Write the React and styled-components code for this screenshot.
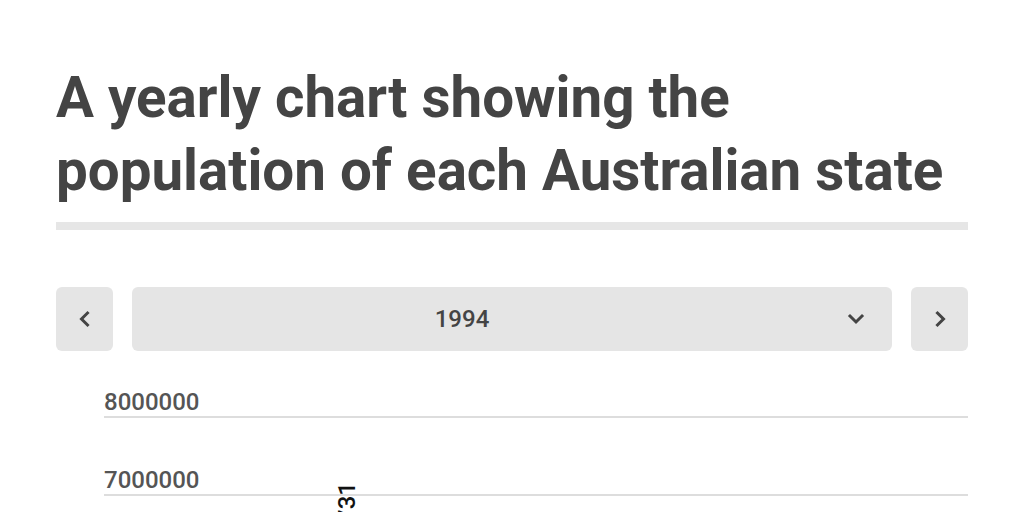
import React from "react";
import styled, { createGlobalStyle } from "styled-components";

const Global = createGlobalStyle`
  html, body { margin: 0; padding: 0; background: #fff; overflow: hidden; }
  body { font-family: Roboto, "Noto Sans", sans-serif; color: #444; }
`;

const Page = styled.main`
  padding: 62px 56px 0;
  width: 912px;
`;

const Title = styled.h1`
  margin: 0;
  font-size: 56.5px;
  line-height: 73px;
  font-weight: 700;
  color: #444;
`;

const Divider = styled.hr`
  margin: 14px 0 0;
  border: 0;
  height: 8px;
  background: #e6e6e6;
`;

const Controls = styled.div`
  margin-top: 57px;
  display: flex;
  gap: 19px;
  height: 64px;
`;

const NavButton = styled.button`
  width: 57px;
  flex: none;
  border: 0;
  border-radius: 6px;
  background: #e5e5e5;
  color: #444;
  display: flex;
  align-items: center;
  justify-content: center;
  padding: 0;
`;

const Select = styled.div`
  flex: 1;
  border-radius: 6px;
  background: #e5e5e5;
  display: flex;
  align-items: center;
  justify-content: center;
  padding-right: 100px;
  position: relative;
  font-size: 24px;
  font-weight: 500;
  color: #444;
`;

const Caret = styled.span`
  position: absolute;
  right: 26px;
  top: 50%;
  transform: translateY(-50%);
  display: flex;
`;

const Chart = styled.div`
  position: relative;
  margin-top: 37px;
  padding-left: 48px;
`;

const Tick = styled.div`
  font-size: 24px;
  line-height: 28px;
  font-weight: 500;
  color: #555;
  border-bottom: 2px solid #ddd;
  margin-bottom: 48px;
`;

const BarLabel = styled.span`
  position: absolute;
  left: ${(p) => p.$left}px;
  top: ${(p) => p.$top}px;
  width: 140px;
  text-align: right;
  font-size: 24px;
  line-height: 28px;
  font-weight: 500;
  color: #111;
  transform-origin: 0 0;
  transform: rotate(-90deg);
`;

const Chevron = ({ d }) => (
  <svg width="20" height="20" viewBox="0 0 20 20" fill="none" stroke="#444" strokeWidth="3" strokeLinecap="square" strokeLinejoin="miter">
    <path d={d} />
  </svg>
);

const ticks = ["8000000", "7000000", "6000000", "5000000", "4000000", "3000000", "2000000", "1000000", "0"];

export default function App() {
  return (
    <>
      <Global />
      <Page>
        <Title>A yearly chart showing the population of each Australian state</Title>
        <Divider />
        <Controls>
          <NavButton aria-label="Previous year">
            <Chevron d="M12.5 4 L6.5 10 L12.5 16" />
          </NavButton>
          <Select>
            1994
            <Caret>
              <Chevron d="M4 7 L10 13 L16 7" />
            </Caret>
          </Select>
          <NavButton aria-label="Next year">
            <Chevron d="M7.5 4 L13.5 10 L7.5 16" />
          </NavButton>
        </Controls>
        <Chart>
          {ticks.map((t) => (
            <Tick key={t}>{t}</Tick>
          ))}
          <BarLabel $left={277} $top={234}>6060731</BarLabel>
        </Chart>
      </Page>
    </>
  );
}
